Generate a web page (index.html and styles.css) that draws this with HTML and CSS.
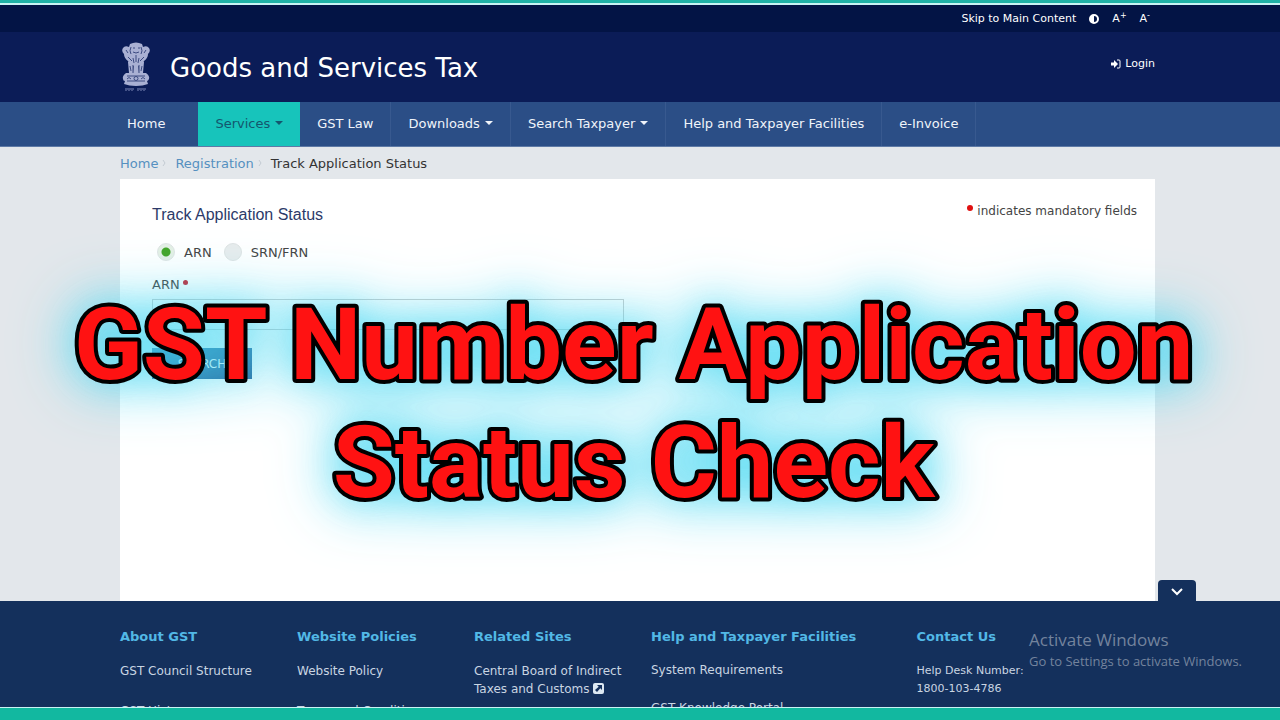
FILE: index.html
```html
<!DOCTYPE html>
<html lang="en">
<head>
<meta charset="utf-8">
<title>Track Application Status</title>
<link rel="stylesheet" href="styles.css">
</head>
<body>
<div class="frame">
  <div class="utility">
    <a class="skip" href="#main">Skip to Main Content</a>
    <button class="tool" aria-label="Contrast"><svg width="10" height="10" viewBox="0 0 10 10"><circle cx="5" cy="5" r="4" fill="none" stroke="#fff" stroke-width="2"/><path d="M5 1a4 4 0 0 0 0 8z" fill="#fff"/></svg></button>
    <button class="tool">A<sup>+</sup></button>
    <button class="tool">A<sup>-</sup></button>
  </div>
  <header class="masthead">
    <svg class="emblem" width="32" height="50" viewBox="0 0 32 50" aria-hidden="true">
      <g fill="#a9b0d3">
        <path d="M10 2q6-3 12 0l1 3q4-2 6 1 2 3-1 6 0 4-4 7l-2 5H10l-2-5q-4-3-4-7-3-3-1-6 2-3 6-1z"/>
        <path d="M8 20h5l1 11H9zM14 22h4v10h-4zM19 20h5l-1 11h-5z"/>
        <path d="M6 31h20q4 3 3 6-1 2-2 2l1 3q-5 2-12 2T4 42l1-3q-2 0-2-2-1-3 3-6z"/>
      </g>
      <g fill="none" stroke="#3c4a80" stroke-width="1">
        <path d="M11 5q-2 4 0 7m10-7q2 4 0 7M13 6h2m3 0h2M13 10q3 2 6 0M6 8l2 3m18-3-2 3M8 15l4 4m12-4-4 4M16 13v7M13 16l1 5m5-5-1 5"/>
        <path d="M13 23v8m6-8v8M10 24l1 5m11-5-1 5M7 34h18M7 39h18"/>
        <circle cx="16" cy="36.500" r="2"/><path d="M7 37q2-3 4 0m10 0q2-3 4 0"/>
      </g>
      <path d="M5 47h9m3 0h9M6 48v1m3-1v1m3-1v1m6-1v1m3-1v1m3-1v1" stroke="#7f88b8" fill="none"/>
    </svg>
    <h1 class="brand">Goods and Services Tax</h1>
    <a class="login" href="#"><svg width="10" height="10" viewBox="0 0 10 10" aria-hidden="true"><path d="M0 3.500h3V1l4 4-4 4V6.500H0z" fill="#fff"/><path d="M6 1h2q1 0 1 1v6q0 1-1 1H6" fill="none" stroke="#fff"/></svg>Login</a>
  </header>
  <nav class="menu">
    <a class="item home" href="#">Home</a>
    <a class="item active" href="#">Services<i class="caret"></i></a>
    <a class="item" href="#">GST Law</a>
    <a class="item" href="#">Downloads<i class="caret"></i></a>
    <a class="item" href="#">Search Taxpayer<i class="caret"></i></a>
    <a class="item" href="#">Help and Taxpayer Facilities</a>
    <a class="item" href="#">e-Invoice</a>
  </nav>
  <div class="content" id="main">
    <div class="crumbs">
      <a href="#">Home</a><svg class="sep" width="5" height="8" viewBox="0 0 5 8"><path d="M1 1l2 3-2 3" fill="none" stroke="#c3cbd3"/></svg><a href="#">Registration</a><svg class="sep" width="5" height="8" viewBox="0 0 5 8"><path d="M1 1l2 3-2 3" fill="none" stroke="#c3cbd3"/></svg><span>Track Application Status</span>
    </div>
    <main class="card">
      <div class="card-head">
        <h2 class="title">Track Application Status</h2>
        <p class="note"><i class="dot big"></i>indicates mandatory fields</p>
      </div>
      <form class="form">
        <div class="choices">
          <label class="choice"><input type="radio" name="kind" checked>ARN</label>
          <label class="choice"><input type="radio" name="kind">SRN/FRN</label>
        </div>
        <label class="field-label" for="arn">ARN<i class="dot"></i></label>
        <input class="field" id="arn" type="text">
        <button class="search" type="button">SEARCH</button>
      </form>
    </main>
  </div>
  <footer class="footer">
    <button class="collapse" aria-label="Collapse footer"><svg width="14" height="10" viewBox="0 0 14 10"><path d="M2 2l5 5 5-5" fill="none" stroke="#fff" stroke-width="2"/></svg></button>
    <section><h3>About GST</h3><a href="#">GST Council Structure</a><a href="#">GST History</a></section>
    <section><h3>Website Policies</h3><a href="#">Website Policy</a><a href="#">Terms and Conditions</a></section>
    <section><h3>Related Sites</h3><a href="#">Central Board of Indirect Taxes and Customs <svg class="ext" width="11" height="11" viewBox="0 0 11 11"><rect width="11" height="11" rx="2" fill="#dce8f2"/><path d="M4 2h5v5L7.300 5.300 4 9 2 7l3.700-3.300z" fill="#14305c"/></svg></a></section>
    <section class="tight"><h3>Help and Taxpayer Facilities</h3><a href="#">System Requirements</a><a href="#">GST Knowledge Portal</a></section>
    <section><h3>Contact Us</h3><p>Help Desk Number:<br>1800-103-4786</p></section>
  </footer>
  <div class="watermark"><strong>Activate Windows</strong><span>Go to Settings to activate Windows.</span></div>
  <svg class="headline"><text x="49.500%" y="100">GST Number Application</text><text x="49.500%" y="218">Status Check</text></svg>
  <div class="base"></div>
</div>
</body>
</html>
```
FILE: styles.css
```css
* { box-sizing: border-box; }
body { margin: 0; font-family: "DejaVu Sans", Verdana, sans-serif; font-size: 13px; color: #444; }
a { color: inherit; text-decoration: none; }
button { font: inherit; color: inherit; border: 0; background: none; padding: 0; }
h1, h2, h3, p { margin: 0; font-weight: normal; }
.frame { position: relative; display: flex; flex-direction: column; height: 100vh; overflow: hidden; border-top: 3px solid #20b2a6; background: #e3e7eb; }
.frame > * { flex-shrink: 0; }
.utility, .masthead, .menu, .content, .footer { padding-left: 120px; padding-right: 125px; }
.utility { display: flex; justify-content: flex-end; align-items: center; gap: 13px; height: 29px; border-top: 2px solid #c8f4f4; background: #031445; color: #fff; font-size: 11px; padding-right: 130px; }
.tool { display: flex; align-items: center; }
.tool sup { font-size: 8px; line-height: 8px; align-self: flex-start; }
.masthead { display: flex; align-items: center; height: 70px; background: #0b1c57; color: #fff; }
.emblem { margin-right: 18px; }
.brand { flex: 1; font-size: 26px; padding-top: 2px; }
.login { display: flex; align-items: center; gap: 4px; font-size: 11px; padding-bottom: 7px; }
.menu { display: flex; height: 45px; background: #2b4e86; color: #f0f4fa; padding-left: 110px; border-bottom: 1px solid #5e7aa6; }
.item { display: flex; align-items: center; padding: 0 17px 2px; border-right: 1px solid #38598f; }
.home { padding-right: 33px; border: 0; }
.active { background: #17c4bb; color: #14566e; border: 0; }
.caret { margin-left: 5px; border: 4px solid transparent; border-top-color: currentColor; border-bottom: 0; }
.content { display: flex; flex-direction: column; height: 454px; }
.crumbs { display: flex; align-items: center; height: 32px; color: #333; }
.crumbs a { color: #5590c0; }
.sep { margin: 0 8px 0 4px; }
.card { flex: 1; background: #fff; padding: 24px 18px 0 32px; }
.card-head { display: flex; justify-content: space-between; }
.title { font: 16px/24px "Liberation Sans", Arial, sans-serif; color: #2c3a69; }
.note { font-size: 12px; line-height: 16px; display: flex; gap: 4px; }
.dot { display: inline-block; width: 5px; height: 5px; border-radius: 50%; background: #c8202f; margin-left: 3px; vertical-align: 4px; }
.big { width: 6px; height: 6px; margin-top: 2px; background: #e01010; }
.choices { display: flex; gap: 12px; margin: 15px 0 13px 5px; }
.choice { display: flex; align-items: center; gap: 9px; height: 20px; }
.choice input { appearance: none; width: 18px; height: 18px; margin: 0; border-radius: 50%; border: 1px solid #dfe4e4; background: #e8eced; }
.choice input:checked { background: radial-gradient(circle, #44a528 4px, #e5f0e5 5px); }
.field-label { display: block; line-height: 20px; margin-bottom: 4px; }
.field { display: block; width: 472px; max-width: 100%; height: 31px; border: 1px solid #ccc; background: #fff; }
.search { display: block; width: 100px; height: 31px; margin-top: 18px; background: #2a5f98; color: #fff; font-size: 12px; }
.footer { position: relative; display: grid; grid-template-columns: 2fr 2fr 2fr 3fr 3fr; padding-right: 98px; padding-top: 27px; height: 140px; background: #14305c; color: #c9d5e2; font-size: 12px; line-height: 18px; }
.footer section { padding-right: 20px; }
.footer h3 { font-size: 13px; font-weight: bold; color: #52b8e6; margin-bottom: 16px; white-space: nowrap; }
.footer a { display: block; margin-bottom: 22px; }
.footer p { font-size: 11px; }
.footer .tight h3 { margin-bottom: 15px; }
.footer .tight a { margin-bottom: 20px; }
.ext { vertical-align: -1px; }
.collapse { position: absolute; right: 84px; top: -21px; width: 38px; height: 22px; padding-top: 3px; border-radius: 4px 4px 0 0; background: #14305c; }
.watermark { position: absolute; left: 1029px; top: 625px; display: flex; flex-direction: column; color: #73839d; font: 13px/18px "Open Sans", sans-serif; }
.watermark strong { font-weight: normal; font-size: 17px; line-height: 24px; }
.headline { position: absolute; left: 0; top: 276px; width: 100%; height: 240px; overflow: visible; pointer-events: none; font: bold 101px Roboto, sans-serif; filter: drop-shadow(0 0 16px rgba(70, 215, 242, .35)) drop-shadow(0 0 28px rgba(70, 215, 242, .9)); }
.headline text { text-anchor: middle; fill: #ff1212; stroke: #000; stroke-width: 8px; stroke-linejoin: round; paint-order: stroke; }
.base { position: absolute; left: 0; right: 0; bottom: 0; height: 13px; border-top: 1px solid #c8f4f4; background: #12b8a0; }
```
